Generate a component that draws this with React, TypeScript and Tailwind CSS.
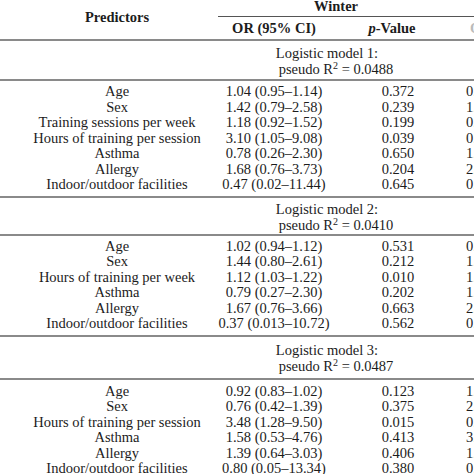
import React from "react";

type Row = [string, string, string, string];

const model1: Row[] = [
  ["Age", "1.04 (0.95–1.14)", "0.372", "0.97 (0.88–1.07)"],
  ["Sex", "1.42 (0.79–2.58)", "0.239", "1.12 (0.61–2.05)"],
  ["Training sessions per week", "1.18 (0.92–1.52)", "0.199", "0.96 (0.74–1.24)"],
  ["Hours of training per session", "3.10 (1.05–9.08)", "0.039", "0.93 (0.32–2.71)"],
  ["Asthma", "0.78 (0.26–2.30)", "0.650", "1.21 (0.43–3.40)"],
  ["Allergy", "1.68 (0.76–3.73)", "0.204", "2.15 (0.98–4.71)"],
  ["Indoor/outdoor facilities", "0.47 (0.02–11.44)", "0.645", "0.62 (0.03–13.10)"],
];

const model2: Row[] = [
  ["Age", "1.02 (0.94–1.12)", "0.531", "0.98 (0.89–1.08)"],
  ["Sex", "1.44 (0.80–2.61)", "0.212", "1.10 (0.60–2.01)"],
  ["Hours of training per week", "1.12 (1.03–1.22)", "0.010", "1.01 (0.93–1.10)"],
  ["Asthma", "0.79 (0.27–2.30)", "0.202", "1.19 (0.42–3.36)"],
  ["Allergy", "1.67 (0.76–3.66)", "0.663", "2.11 (0.96–4.62)"],
  ["Indoor/outdoor facilities", "0.37 (0.013–10.72)", "0.562", "0.58 (0.02–12.40)"],
];

const model3: Row[] = [
  ["Age", "0.92 (0.83–1.02)", "0.123", "1.02 (0.91–1.14)"],
  ["Sex", "0.76 (0.42–1.39)", "0.375", "2.01 (1.02–3.95)"],
  ["Hours of training per session", "3.48 (1.28–9.50)", "0.015", "0.88 (0.30–2.58)"],
  ["Asthma", "1.58 (0.53–4.76)", "0.413", "3.12 (1.01–9.60)"],
  ["Allergy", "1.39 (0.64–3.03)", "0.406", "1.45 (0.66–3.20)"],
  ["Indoor/outdoor facilities", "0.80 (0.05–13.34)", "0.380", "0.71 (0.04–12.90)"],
];

function ModelHeading({ n, r2, pad }: { n: number; r2: string; pad: string }) {
  return (
    <div className={"flex border-b-2 border-[#8a8a8a] " + pad}>
      <div className="w-[218px] shrink-0" />
      <div className="w-[236px] shrink-0 flex flex-col items-center">
        <div className="pr-[18px] whitespace-nowrap h-[16px] leading-[16px]">Logistic model {n}:</div>
        <div className="whitespace-nowrap h-[16px] leading-[16px]">
          pseudo R<sup className="text-[10px] leading-none">2</sup> = {r2}
        </div>
      </div>
    </div>
  );
}

function Rows({ rows, pad, last }: { rows: Row[]; pad: string; last?: boolean }) {
  return (
    <div className={"flex flex-col " + pad + (last ? "" : " border-b-2 border-[#8a8a8a]")}>
      {rows.map((r, i) => (
        <div key={i} className="flex leading-[15.5px] h-[15.5px]">
          <div className="w-[218px] shrink-0 pl-[16px] flex justify-center whitespace-nowrap">{r[0]}</div>
          <div className="w-[112px] shrink-0 flex justify-center whitespace-nowrap">{r[1]}</div>
          <div className="w-[136px] shrink-0 flex justify-center whitespace-nowrap">{r[2]}</div>
          <div className="shrink-0 whitespace-nowrap">{r[3]}</div>
        </div>
      ))}
    </div>
  );
}

export default function App() {
  return (
    <div
      className="w-[474px] h-[474px] overflow-hidden bg-white text-[#1c1c1c] text-[14.5px]"
      style={{ fontFamily: '"Liberation Serif", "Times New Roman", serif' }}
    >
      <div className="w-[600px]">
        {/* Header */}
        <div className="flex border-b-2 border-[#8a8a8a] h-[41px]">
          <div className="w-[218px] shrink-0 pl-[16px] flex justify-center pt-[8px] font-bold leading-[18px]">
            Predictors
          </div>
          <div className="flex-1 flex flex-col">
            <div className="h-[17px] border-b border-[#555] flex">
              <div className="w-[236px] flex justify-center font-bold leading-[12px]">Winter</div>
            </div>
            <div className="flex font-bold leading-[22px] h-[22px]">
              <div className="w-[112px] shrink-0 flex justify-center whitespace-nowrap">OR (95% CI)</div>
              <div className="w-[136px] shrink-0 flex justify-center whitespace-nowrap pr-[12px]">
                <span>
                  <i>p</i>-Value
                </span>
              </div>
              <div className="shrink-0 whitespace-nowrap pl-[4px] text-[#bbb]">OR (95% CI)</div>
            </div>
          </div>
        </div>

        <ModelHeading n={1} r2="0.0488" pad="pt-[4px] pb-[2px]" />
        <Rows rows={model1} pad="pt-[3px] pb-[3px]" />
        <ModelHeading n={2} r2="0.0410" pad="pt-[3px] pb-[1px]" />
        <Rows rows={model2} pad="pt-[3px] pb-[3px]" />
        <ModelHeading n={3} r2="0.0487" pad="pt-[5px] pb-[4px]" />
        <Rows rows={model3} pad="pt-[4px] pb-[3px]" last />
      </div>
    </div>
  );
}
